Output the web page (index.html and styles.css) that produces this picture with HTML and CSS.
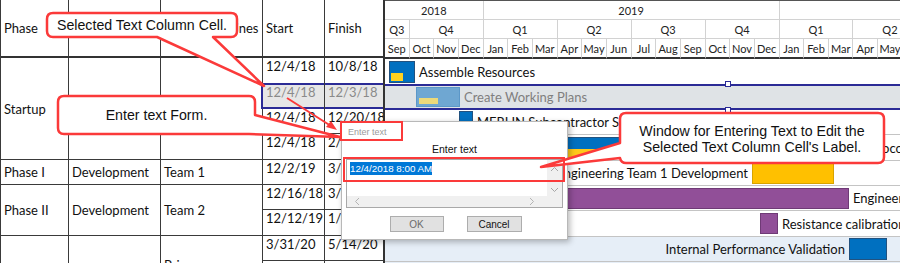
FILE: index.html
```html
<!DOCTYPE html>
<html>
<head>
<meta charset="utf-8">
<link rel="stylesheet" href="styles.css">
</head>
<body>
<div class="sheet">
  <div class="tbl">
    <div class="c h">Phase</div>
    <div class="c h">Category</div>
    <div class="c h">Team Disciplines</div>
    <div class="c h">Start</div>
    <div class="c h last">Finish</div>

    <div class="c mid s4">Startup</div>
    <div class="c mid s4"></div>
    <div class="c mid s4"></div>
    <div class="c d">12/4/18</div><div class="c d last">10/8/18</div>
    <div class="c d sel first">12/4/18</div><div class="c d last sel">12/3/18</div>
    <div class="c d">12/4/18</div><div class="c d last">12/20/18</div>
    <div class="c d">12/4/18</div><div class="c d last">2/15/19</div>

    <div class="c mid">Phase I</div><div class="c mid">Development</div><div class="c mid">Team 1</div>
    <div class="c d">12/2/19</div><div class="c d last">3/13/20</div>

    <div class="c mid s2">Phase II</div><div class="c mid s2">Development</div><div class="c mid s2">Team 2</div>
    <div class="c d">12/16/18</div><div class="c d last">3/31/20</div>
    <div class="c d">12/12/19</div><div class="c d last">1/24/20</div>

    <div class="c mid s3"></div><div class="c mid s3"></div><div class="c mid s3">Prime Contractor</div>
    <div class="c d">3/31/20</div><div class="c d last">5/14/20</div>
    <div class="c d">4/2/20</div><div class="c d last">6/1/20</div>
    <div class="c d">4/20/20</div><div class="c d last">7/9/20</div>
  </div>

  <div class="gantt">
    <div class="ghead">
      <div class="gc y4">2018</div><div class="gc y12">2019</div><div class="gc y12">2020</div>
      <div class="gc q1">Q3</div><div class="gc q3">Q4</div>
      <div class="gc q3">Q1</div><div class="gc q3">Q2</div><div class="gc q3">Q3</div><div class="gc q3">Q4</div>
      <div class="gc q3">Q1</div><div class="gc q3">Q2</div><div class="gc q3">Q3</div><div class="gc q3">Q4</div>
      <div class="gc m">Sep</div><div class="gc m">Oct</div><div class="gc m">Nov</div><div class="gc m">Dec</div>
      <div class="gc m">Jan</div><div class="gc m">Feb</div><div class="gc m">Mar</div><div class="gc m">Apr</div><div class="gc m">May</div><div class="gc m">Jun</div>
      <div class="gc m">Jul</div><div class="gc m">Aug</div><div class="gc m">Sep</div><div class="gc m">Oct</div><div class="gc m">Nov</div><div class="gc m">Dec</div>
      <div class="gc m">Jan</div><div class="gc m">Feb</div><div class="gc m">Mar</div><div class="gc m">Apr</div><div class="gc m">May</div><div class="gc m">Jun</div>
      <div class="gc m">Jul</div><div class="gc m">Aug</div><div class="gc m">Sep</div><div class="gc m">Oct</div><div class="gc m">Nov</div><div class="gc m">Dec</div>
    </div>
    <div class="gbody">
      <div class="grow h26">
        <div class="task" style="left:4px"><div class="bar blue" style="width:26px"><span class="prog" style="width:12px"></span></div><span class="lbl">Assemble Resources</span></div>
      </div>
      <div class="grow h25 sel">
        <div class="task" style="left:31px"><div class="bar faded" style="width:44px"><span class="prog pfaded" style="width:19px"></span></div><span class="lbl gray">Create Working Plans</span></div>
        <span class="handle top" style="left:340px"></span>
        <span class="handle bottom" style="left:340px"></span>
      </div>
      <div class="grow h25">
        <div class="task" style="left:74px"><div class="bar blue" style="width:14px"></div><span class="lbl">MERLIN Subcontractor Selection</span></div>
      </div>
      <div class="grow h26">
        <div class="task" style="left:95px"><div class="bar blue" style="width:374px"><span class="prog full" style="width:372px"></span></div><span class="lbl">Protocol Design</span></div>
      </div>
      <div class="grow h25">
        <div class="task rev" style="right:66px"><span class="lbl">Engineering Team 1 Development</span><div class="bar yellow" style="width:82px"></div></div>
      </div>
      <div class="grow h25">
        <div class="task" style="left:15px"><div class="bar purple" style="width:449px"></div><span class="lbl">Engineering Team 2 Development</span></div>
      </div>
      <div class="grow h26">
        <div class="task" style="left:375px"><div class="bar purple" style="width:18px"></div><span class="lbl">Resistance calibration</span></div>
      </div>
      <div class="grow h25 alt">
        <div class="task rev" style="right:13px"><span class="lbl">Internal Performance Validation</span><div class="bar blue" style="width:38px"></div></div>
      </div>
      <div class="grow h25 alt"></div>
      <div class="grow h25 alt"></div>
    </div>
  </div>
</div>

<div class="dlg">
  <div class="dlg-title">Enter text</div>
  <div class="dlg-label">Enter text</div>
  <div class="ta">
    <div class="ta-text"><span class="hl">12/4/2018 8:00 AM</span></div>
    <div class="vscroll">
      <svg width="9" height="6" viewBox="0 0 9 6"><path d="M1 5 L4.5 1.5 L8 5" fill="none" stroke="#a6a6a6" stroke-width="1"/></svg>
      <svg width="9" height="6" viewBox="0 0 9 6"><path d="M1 1 L4.5 4.5 L8 1" fill="none" stroke="#a6a6a6" stroke-width="1"/></svg>
    </div>
    <div class="hscroll">
      <svg width="6" height="9" viewBox="0 0 6 9"><path d="M5 1 L1.5 4.5 L5 8" fill="none" stroke="#b4b4b4" stroke-width="1"/></svg>
      <svg width="6" height="9" viewBox="0 0 6 9"><path d="M1 1 L4.5 4.5 L1 8" fill="none" stroke="#b4b4b4" stroke-width="1"/></svg>
    </div>
    <div class="corner"></div>
  </div>
  <div class="btns">
    <div class="btn ok">OK</div>
    <div class="btn">Cancel</div>
  </div>
</div>

<svg class="overlay" width="900" height="263" viewBox="0 0 900 263">
  <g fill="#fff" stroke="#fb3a3a" stroke-width="2.5" stroke-linejoin="round">
    <path d="M53,13 H231 Q237,13 237,19 V31 Q237,37 231,37 H213 L264,86 L157,37 H53 Q47,37 47,31 V19 Q47,13 53,13 Z"/>
    <path d="M64,96 H249 Q255,96 255,102 V115 L340,137 L249,134 H64 Q58,134 58,128 V102 Q58,96 64,96 Z"/>
    <path d="M626,113 H878 Q884,113 884,119 V157 Q884,163 878,163 H626 Q621,163 620,158 L541,167 L620,143 V119 Q620,113 626,113 Z"/>
  </g>
  <g fill="none" stroke="#fb3a3a" stroke-width="2">
    <rect x="341" y="122" width="61" height="18"/>
    <rect x="344" y="158" width="220" height="23"/>
    <line x1="287" y1="98" x2="331" y2="126"/>
  </g>
  <polygon points="337,130 326,127 331,121" fill="#fb3a3a"/>
</svg>

<div class="ctext c1">Selected Text Column Cell.</div>
<div class="ctext c2">Enter text Form.</div>
<div class="ctext c3">Window for Entering Text to Edit the<br>Selected Text Column Cell's Label.</div>
</body>
</html>
```

FILE: styles.css
```css
* { box-sizing: border-box; }
body {
  margin: 0;
  background: #fff;
  font-family: Lato, "Open Sans", sans-serif;
  color: #111;
  width: 900px;
  height: 263px;
  overflow: hidden;
  position: relative;
}
.sheet {
  display: flex;
  width: 900px;
  height: 263px;
  overflow: hidden;
}

/* ---------- table ---------- */
.tbl {
  flex: none;
  display: grid;
  grid-template-columns: 68px 92px 102px 62px 58px;
  grid-template-rows: 58px 26px 25px 25px 26px 25px 25px 26px 25px 25px 25px;
  border-left: 1px solid #3a3a3a;
}
.c {
  border-right: 1px solid #3a3a3a;
  border-bottom: 1px solid #3a3a3a;
  font-size: 13px;
  line-height: 16px;
  padding: 0 3px;
  white-space: nowrap;
  overflow: hidden;
}
.c.last { border-right: none; }
.c.h {
  display: flex;
  align-items: center;
  border-bottom: 2px solid #333;
}
.c.mid {
  display: flex;
  align-items: center;
  white-space: normal;
}
.s4 { grid-row: span 4; }
.s3 { grid-row: span 3; }
.s2 { grid-row: span 2; }
.c.sel {
  position: relative;
  overflow: visible;
  background: #e6e6e6;
  color: #8a8a8a;
}
.c.sel::after {
  content: "";
  position: absolute;
  left: 0;
  right: 0;
  top: -1px;
  bottom: -1px;
  border-top: 2px solid #2b2b96;
  border-bottom: 2px solid #2b2b96;
}
.c.sel.first::after {
  left: -2px;
  border-left: 2px solid #2b2b96;
}

/* ---------- gantt ---------- */
.gantt {
  flex: 1;
  min-width: 0;
  border-left: 2px solid #333;
  overflow: hidden;
}
.ghead {
  display: grid;
  grid-template-columns: repeat(28, 24.667px);
  grid-template-rows: 19px 19px 20px;
  border-top: 1px solid #555;
}
.gc {
  border-right: 1px solid #d2d2d2;
  border-bottom: 1px solid #d2d2d2;
  font-size: 11px;
  color: #222;
  display: flex;
  align-items: center;
  justify-content: center;
  white-space: nowrap;
  overflow: hidden;
}
.gc.m { border-bottom: 2px solid #333; }
.y4 { grid-column: span 4; }
.y12 { grid-column: span 12; }
.q1 { grid-column: span 1; }
.q3 { grid-column: span 3; }

.gbody { display: flex; flex-direction: column; }
.grow {
  position: relative;
  flex: none;
  border-bottom: 1px solid #c4c4c4;
}
.h26 { height: 26px; }
.h25 { height: 25px; }
.grow.alt { background: #e6eef7; }
.grow.sel { background: #dfe3e6; }
.grow.sel::after {
  content: "";
  position: absolute;
  left: 0;
  right: 0;
  top: -1px;
  bottom: -1px;
  border-top: 2px solid #2b2b96;
  border-bottom: 2px solid #2b2b96;
}
.handle {
  position: absolute;
  width: 6px;
  height: 6px;
  background: #fff;
  border: 1px solid #2b2b96;
  z-index: 2;
}
.handle.top { top: -4px; }
.handle.bottom { bottom: -4px; }

.task {
  position: absolute;
  top: 0;
  bottom: 0;
  display: flex;
  align-items: center;
  gap: 4px;
  white-space: nowrap;
}
.lbl { font-size: 13px; color: #111; }
.lbl.gray { color: #7f7f7f; }
.bar {
  position: relative;
  height: 21px;
  border: 1px solid #1f4e79;
  flex: none;
}
.bar.blue { background: #0070c0; border-color: #22527f; height: 22px; }
.bar.faded { background: #6fa7d2; border-color: #5b97c8; height: 20px; }
.bar.yellow { background: #ffc000; border-color: #d8a300; }
.bar.purple { background: #914f98; border-color: #6f3a76; }
.prog {
  position: absolute;
  left: 1px;
  bottom: 1px;
  height: 8px;
  background: #ffd21f;
}
.prog.pfaded { background: #ecd97a; height: 6px; bottom: 2px; left: 2px; }
.prog.full { left: 0; bottom: 0; height: 9px; background: #ffc91a; }

/* ---------- dialog ---------- */
.dlg {
  position: absolute;
  left: 341px;
  top: 121px;
  width: 227px;
  height: 119px;
  background: #fff;
  border: 1px solid #b8b8b8;
  box-shadow: 2px 2px 6px rgba(0, 0, 0, 0.28);
  display: flex;
  flex-direction: column;
  font-family: "Liberation Sans", Arial, sans-serif;
  z-index: 5;
}
.dlg-title {
  height: 19px;
  display: flex;
  align-items: center;
  padding-left: 6px;
  font-size: 9px;
  color: #9a9a9a;
}
.dlg-label {
  height: 18px;
  line-height: 17px;
  text-align: center;
  font-size: 10.5px;
  color: #111;
}
.ta {
  margin: 0 4px 0 4px;
  height: 49px;
  border: 1px solid #a9a9a9;
  display: grid;
  grid-template-columns: 1fr 15px;
  grid-template-rows: 1fr 11px;
}
.ta-text {
  padding: 2px 0 0 3px;
  font-size: 9.8px;
  line-height: 13px;
}
.hl { background: #0078d7; color: #fff; display: inline-block; }
.vscroll {
  background: #f0f0f0;
  display: flex;
  flex-direction: column;
  align-items: center;
  justify-content: space-between;
  padding: 6px 0 3px;
}
.hscroll {
  background: #f0f0f0;
  display: flex;
  align-items: center;
  justify-content: space-between;
  padding: 0 12px 0 7px;
}
.corner { background: #f0f0f0; }
.btns {
  margin-top: 8px;
  display: flex;
  justify-content: center;
  gap: 23px;
  padding-left: 2px;
}
.btn {
  width: 55px;
  height: 16px;
  border: 1px solid #adadad;
  background: #e1e1e1;
  font-size: 10px;
  display: flex;
  align-items: center;
  justify-content: center;
  color: #111;
}
.btn.ok { color: #6b6b6b; width: 54px; }

/* ---------- callouts ---------- */
.overlay {
  position: absolute;
  left: 0;
  top: 0;
  z-index: 8;
}
.ctext {
  position: absolute;
  z-index: 9;
  font-family: "Liberation Sans", Arial, sans-serif;
  font-size: 14.2px;
  line-height: 16px;
  color: #111;
  text-align: center;
  white-space: nowrap;
}
.c1 { left: 47px; top: 17px; width: 190px; }
.c2 { left: 58px; top: 107px; width: 197px; }
.c3 { left: 620px; top: 123px; width: 264px; }
```
